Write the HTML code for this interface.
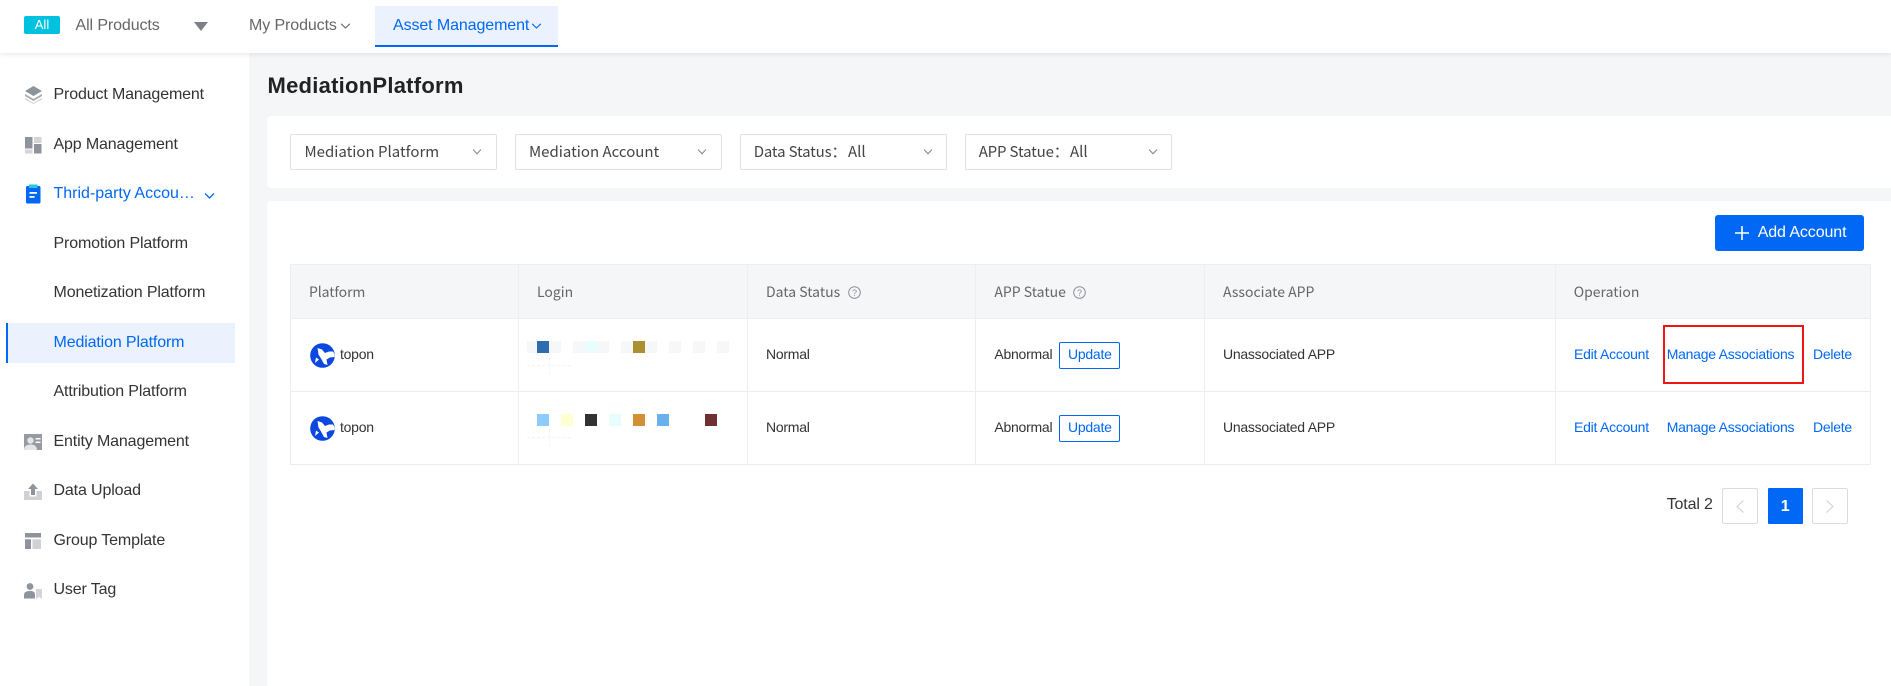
<!DOCTYPE html>
<html lang="en">
<head>
<meta charset="utf-8">
<title>MediationPlatform</title>
<style>
html,body{margin:0;padding:0;width:1891px;height:686px;overflow:hidden;background:#f5f6f8;font-family:"Liberation Sans","Noto Sans CJK SC",sans-serif;color:#333}
.a{position:absolute}
.t{position:absolute;white-space:nowrap;line-height:20px;height:20px}
.side{font-size:16px;left:53.5px;color:#333;letter-spacing:-.14px}
.n{font-family:"Noto Sans CJK SC","Liberation Sans",sans-serif}
.h{font-size:14px;color:#666;top:282px}
.c{font-size:14px;color:#333;letter-spacing:-.25px}
.l{font-size:14px;color:#0068f5;letter-spacing:-.25px}
.sel{position:absolute;top:134px;height:34px;background:#fff;border:1px solid #dfe2e8;border-radius:2px;box-sizing:content-box}
.st{font-size:15px;top:142px;color:#444}
.m{position:absolute;width:12px;height:12px}
.g{position:absolute;height:0;border-top:1px dashed #f2f3f4}
.v{position:absolute;width:0;border-left:1px dashed #f4f5f6}
svg{position:absolute;display:block}
</style>
</head>
<body>
<!-- main surfaces -->
<div class="a" style="left:0;top:53px;width:249px;height:633px;background:#fff"></div>
<div class="a" style="left:267px;top:116px;width:1624px;height:72px;background:#fff;border-radius:4px 0 0 4px"></div>
<div class="a" style="left:267px;top:201px;width:1624px;height:485px;background:#fff;border-radius:4px 0 0 0"></div>

<!-- top bar -->
<div class="a" style="left:0;top:0;width:1891px;height:53px;background:#fff;box-shadow:0 1px 5px rgba(0,0,0,.1)"></div>
<div class="a" style="left:24px;top:16px;width:36px;height:18px;background:#00c1de;border-radius:2px;color:#fff;font-size:13px;line-height:18px;text-align:center">All</div>
<div class="t" style="left:75.5px;top:15.5px;font-size:16px;color:#666;letter-spacing:-.1px">All Products</div>
<svg style="left:194px;top:21.500px" width="14" height="9" viewBox="0 0 14 9"><path d="M0 0H14L7 9Z" fill="#7d8087"/></svg>
<div class="t" style="left:249px;top:15.5px;font-size:16px;color:#666;letter-spacing:-.1px">My Products</div>
<svg style="left:340px;top:22px" width="11" height="8" viewBox="0 0 11 8"><path d="M1.2 1.8 5.5 6 9.8 1.8" fill="none" stroke="#666" stroke-width="1.1"/></svg>
<div class="a" style="left:375px;top:6px;width:183px;height:41px;background:#ebf2fd;border-bottom:2px solid #0068f5;box-sizing:border-box"></div>
<div class="t" style="left:393px;top:15.5px;font-size:16px;color:#0068f5;letter-spacing:-.1px">Asset Management</div>
<svg style="left:531px;top:22px" width="11" height="8" viewBox="0 0 11 8"><path d="M1.2 1.8 5.5 6 9.8 1.8" fill="none" stroke="#0068f5" stroke-width="1.1"/></svg>

<!-- sidebar -->
<svg style="left:24px;top:85px" width="19" height="19" viewBox="0 0 19 19"><path d="M9.5 1 18 6 9.5 11 1 6Z" fill="#8f939c"/><path d="M1 9 9.5 14 18 9V11L9.5 16 1 11Z" fill="#a5a8b0"/><path d="M1 13 9.5 18 18 13V14.500L9.5 19 1 14.500Z" fill="#cfd1d6"/></svg>
<div class="t side" style="top:85px">Product Management</div>
<svg style="left:25px;top:136px" width="17" height="18" viewBox="0 0 17 18"><rect x="0" y="1" width="7.500" height="11.500" fill="#8f939c"/><rect x="0" y="13.500" width="7.500" height="4" fill="#d3d5d9"/><rect x="9" y="1" width="7.500" height="6" fill="#d3d5d9"/><rect x="9" y="8" width="7.500" height="9.500" fill="#8f939c"/></svg>
<div class="t side" style="top:135px">App Management</div>
<svg style="left:25px;top:184px" width="16" height="20" viewBox="0 0 16 20"><rect x="1" y="2" width="14.500" height="17.500" rx="1.500" fill="#0068f5"/><rect x="4" y="0.500" width="8.500" height="3.500" fill="#2ac5e2"/><rect x="4.500" y="8" width="7.500" height="1.800" fill="#fff"/><rect x="4.500" y="12" width="5" height="1.800" fill="#fff"/></svg>
<div class="t side" style="top:184px;color:#0068f5;letter-spacing:0">Thrid-party Accou…</div>
<svg style="left:204px;top:191.500px" width="11" height="8" viewBox="0 0 11 8"><path d="M1 1.500 5.500 6 10 1.500" fill="none" stroke="#0068f5" stroke-width="1.300"/></svg>
<div class="t side" style="top:234px">Promotion Platform</div>
<div class="t side" style="top:283px">Monetization Platform</div>
<div class="a" style="left:6px;top:323px;width:229px;height:40px;background:#ebf2fd;border-left:2px solid #0068f5;box-sizing:border-box"></div>
<div class="t side" style="top:333px;color:#0068f5">Mediation Platform</div>
<div class="t side" style="top:382px">Attribution Platform</div>
<svg style="left:24px;top:434px" width="18" height="16" viewBox="0 0 18 16"><rect width="18" height="16" fill="#969aa2"/><circle cx="6.500" cy="6.500" r="3.200" fill="#e4e5e8"/><path d="M0 16C0 12 3 10.500 6.500 10.500S13 12 13 16Z" fill="#e4e5e8"/><rect x="11.500" y="4" width="5" height="1.500" fill="#fff"/><rect x="11.500" y="7.500" width="5" height="1.500" fill="#fff"/></svg>
<div class="t side" style="top:432px">Entity Management</div>
<svg style="left:24px;top:483px" width="18" height="17" viewBox="0 0 18 17"><path d="M9 0.500 14 6H11V12H7V6H4Z" fill="#8f939c"/><path d="M0 8H5.500V13.500H12.500V8H18V17H0Z" fill="#cfd1d6"/></svg>
<div class="t side" style="top:481px">Data Upload</div>
<svg style="left:25px;top:533px" width="16" height="16" viewBox="0 0 16 16"><rect width="16" height="4.500" fill="#8f939c"/><rect y="6.300" width="6" height="9.700" fill="#8f939c"/><rect x="7.500" y="6.300" width="8.500" height="9.700" fill="#cfd1d6"/></svg>
<div class="t side" style="top:531px">Group Template</div>
<svg style="left:24px;top:583px" width="18" height="16" viewBox="0 0 18 16"><circle cx="6" cy="3.500" r="3.400" fill="#8f939c"/><path d="M0 15.500V12C0 9 2.500 8 6 8S11 9 11 12V15.500Z" fill="#8f939c"/><path d="M12 6H18V16L15 14 12 16Z" fill="#d3d5d9"/></svg>
<div class="t side" style="top:580px">User Tag</div>

<!-- title -->
<div class="t" style="left:267.5px;top:75px;font-size:22px;font-weight:bold;color:#222;letter-spacing:.25px;line-height:22px">MediationPlatform</div>

<!-- filters -->
<div class="sel" style="left:290px;width:205px"></div>
<div class="t n st" style="left:304.500px">Mediation Platform</div>
<svg style="left:472px;top:148px" width="10" height="8" viewBox="0 0 10 8"><path d="M1 1.500 5 5.800 9 1.500" fill="none" stroke="#8a8d94" stroke-width="1.100"/></svg>
<div class="sel" style="left:515px;width:205px"></div>
<div class="t n st" style="left:529px">Mediation Account</div>
<svg style="left:697px;top:148px" width="10" height="8" viewBox="0 0 10 8"><path d="M1 1.500 5 5.800 9 1.500" fill="none" stroke="#8a8d94" stroke-width="1.100"/></svg>
<div class="sel" style="left:740px;width:205px"></div>
<div class="t n st" style="left:753.700px;letter-spacing:-.15px">Data Status：</div>
<div class="t n st" style="left:848px">All</div>
<svg style="left:923px;top:148px" width="10" height="8" viewBox="0 0 10 8"><path d="M1 1.500 5 5.800 9 1.500" fill="none" stroke="#8a8d94" stroke-width="1.100"/></svg>
<div class="sel" style="left:965px;width:205px"></div>
<div class="t n st" style="left:978.700px;letter-spacing:-.15px">APP Statue：</div>
<div class="t n st" style="left:1070px">All</div>
<svg style="left:1148px;top:148px" width="10" height="8" viewBox="0 0 10 8"><path d="M1 1.500 5 5.800 9 1.500" fill="none" stroke="#8a8d94" stroke-width="1.100"/></svg>

<!-- add account -->
<div class="a" style="left:1715px;top:215px;width:149px;height:36px;background:#0068f5;border-radius:3px"></div>
<svg style="left:1735px;top:225.500px" width="14" height="14" viewBox="0 0 14 14"><path d="M7 0V14M0 7H14" stroke="#fff" stroke-width="1.600"/></svg>
<div class="t" style="left:1757.700px;top:222.500px;font-size:16px;color:#fff;letter-spacing:-.1px">Add Account</div>

<!-- table -->
<div class="a" style="left:290px;top:264px;width:1581px;height:201px;border:1px solid #eceef1;box-sizing:border-box"></div>
<div class="a" style="left:291px;top:265px;width:1579px;height:53.500px;background:#f5f6f8"></div>
<div class="a" style="left:291px;top:318px;width:1579px;height:1px;background:#eceef1"></div>
<div class="a" style="left:291px;top:391px;width:1579px;height:1px;background:#eceef1"></div>
<div class="a" style="left:518px;top:265px;width:1px;height:199px;background:#eceef1"></div>
<div class="a" style="left:747px;top:265px;width:1px;height:199px;background:#eceef1"></div>
<div class="a" style="left:975px;top:265px;width:1px;height:199px;background:#eceef1"></div>
<div class="a" style="left:1204px;top:265px;width:1px;height:199px;background:#eceef1"></div>
<div class="a" style="left:1555px;top:265px;width:1px;height:199px;background:#eceef1"></div>

<div class="t n h" style="left:309px;letter-spacing:-.1px">Platform</div>
<div class="t n h" style="left:537px">Login</div>
<div class="t n h" style="left:766px">Data Status</div>
<svg style="left:848px;top:286px" width="13" height="13" viewBox="0 0 13 13"><circle cx="6.500" cy="6.500" r="5.800" fill="none" stroke="#8d9096"/><text x="6.500" y="9.800" font-size="9" text-anchor="middle" fill="#8d9096" font-family="Liberation Sans">?</text></svg>
<div class="t n h" style="left:994.400px">APP Statue</div>
<svg style="left:1073px;top:286px" width="13" height="13" viewBox="0 0 13 13"><circle cx="6.500" cy="6.500" r="5.800" fill="none" stroke="#8d9096"/><text x="6.500" y="9.800" font-size="9" text-anchor="middle" fill="#8d9096" font-family="Liberation Sans">?</text></svg>
<div class="t n h" style="left:1223px">Associate APP</div>
<div class="t n h" style="left:1573.700px">Operation</div>

<!-- row 1 -->
<svg style="left:310px;top:343px" width="25" height="25" viewBox="0 0 25 25"><circle cx="12.500" cy="12.500" r="12.300" fill="#0a48e0"/><path d="M7.500 5 12 6.500 15 10 19 8.500 23 8.500 24.500 11 24.500 14 20 14.500 16.500 16.500 17.500 22 14 21 11 15.500 8.500 11.500Z" fill="#fff"/><path d="M6 14.500 9 16.500 5 20Z" fill="#fff"/></svg>
<div class="t c" style="left:340px;top:344px">topon</div>
<div class="m" style="left:527px;top:341px;width:10px;background:#f6f7f9"></div>
<div class="m" style="left:537px;top:341px;background:#2e6cb0"></div>
<div class="m" style="left:549px;top:341px;background:#f6f7f9"></div>
<div class="m" style="left:573px;top:341px;background:#f6f7f9"></div>
<div class="m" style="left:585px;top:341px;background:#e8fefe"></div>
<div class="m" style="left:597px;top:341px;background:#f6f7f9"></div>
<div class="m" style="left:621px;top:341px;background:#f6f7f9"></div>
<div class="m" style="left:633px;top:341px;background:#ab8f30"></div>
<div class="m" style="left:645px;top:341px;background:#f6f7f9"></div>
<div class="m" style="left:669px;top:341px;background:#f6f7f9"></div>
<div class="m" style="left:693px;top:341px;background:#f6f7f9"></div>
<div class="m" style="left:717px;top:341px;background:#f6f7f9"></div>
<div class="g" style="left:527px;top:365px;width:44px"></div>
<div class="v" style="left:549px;top:358px;height:17px"></div>
<div class="t c" style="left:766px;top:344px">Normal</div>
<div class="t c" style="left:994.400px;top:344px">Abnormal</div>
<div class="a" style="left:1059px;top:342px;width:61px;height:27px;border:1px solid #0068f5;border-radius:2px;box-sizing:border-box;background:#fff"></div>
<div class="t l" style="left:1068px;top:344px">Update</div>
<div class="t c" style="left:1223px;top:344px">Unassociated APP</div>
<div class="t l" style="left:1574px;top:344px">Edit Account</div>
<div class="t l" style="left:1666.700px;top:344px">Manage Associations</div>
<div class="t l" style="left:1813px;top:344px">Delete</div>
<div class="a" style="left:1662.500px;top:325px;width:141px;height:58.500px;border:2px solid #f01414;box-sizing:border-box"></div>

<!-- row 2 -->
<svg style="left:310px;top:416px" width="25" height="25" viewBox="0 0 25 25"><circle cx="12.500" cy="12.500" r="12.300" fill="#0a48e0"/><path d="M7.500 5 12 6.500 15 10 19 8.500 23 8.500 24.500 11 24.500 14 20 14.500 16.500 16.500 17.500 22 14 21 11 15.500 8.500 11.500Z" fill="#fff"/><path d="M6 14.500 9 16.500 5 20Z" fill="#fff"/></svg>
<div class="t c" style="left:340px;top:417px">topon</div>
<div class="m" style="left:537px;top:413.500px;background:#8ecbff"></div>
<div class="m" style="left:561px;top:413.500px;background:#ffffcf"></div>
<div class="m" style="left:585px;top:413.500px;background:#333"></div>
<div class="m" style="left:609px;top:413.500px;background:#e8fefe"></div>
<div class="m" style="left:633px;top:413.500px;background:#d29033"></div>
<div class="m" style="left:657px;top:413.500px;background:#6ab0ee"></div>
<div class="m" style="left:705px;top:413.500px;background:#6f3033"></div>
<div class="g" style="left:527px;top:437px;width:44px"></div>
<div class="v" style="left:549px;top:430px;height:17px"></div>
<div class="t c" style="left:766px;top:416.500px">Normal</div>
<div class="t c" style="left:994.400px;top:416.500px">Abnormal</div>
<div class="a" style="left:1059px;top:415px;width:61px;height:27px;border:1px solid #0068f5;border-radius:2px;box-sizing:border-box;background:#fff"></div>
<div class="t l" style="left:1068px;top:417px">Update</div>
<div class="t c" style="left:1223px;top:416.500px">Unassociated APP</div>
<div class="t l" style="left:1574px;top:416.500px">Edit Account</div>
<div class="t l" style="left:1666.700px;top:416.500px">Manage Associations</div>
<div class="t l" style="left:1813px;top:416.500px">Delete</div>

<!-- pagination -->
<div class="t" style="left:1666.700px;top:494.500px;font-size:16px;color:#333;letter-spacing:-.15px">Total 2</div>
<div class="a" style="left:1722px;top:488px;width:36px;height:36px;border:1px solid #dcdcdc;border-radius:2px;box-sizing:border-box;background:#fff"></div>
<svg style="left:1736px;top:500px" width="8" height="13" viewBox="0 0 8 13"><path d="M7.500 .5 1 6.500 7.500 12.500" fill="none" stroke="#cfcfcf" stroke-width="1"/></svg>
<div class="a" style="left:1768px;top:488px;width:34.500px;height:35.500px;background:#0068f5;border-radius:1px;color:#fff;font-weight:bold;font-size:16px;line-height:37px;text-align:center">1</div>
<div class="a" style="left:1812px;top:488px;width:36px;height:36px;border:1px solid #dcdcdc;border-radius:2px;box-sizing:border-box;background:#fff"></div>
<svg style="left:1826px;top:500px" width="8" height="13" viewBox="0 0 8 13"><path d="M.5 .5 7 6.500 .5 12.500" fill="none" stroke="#cfcfcf" stroke-width="1"/></svg>
</body>
</html>
